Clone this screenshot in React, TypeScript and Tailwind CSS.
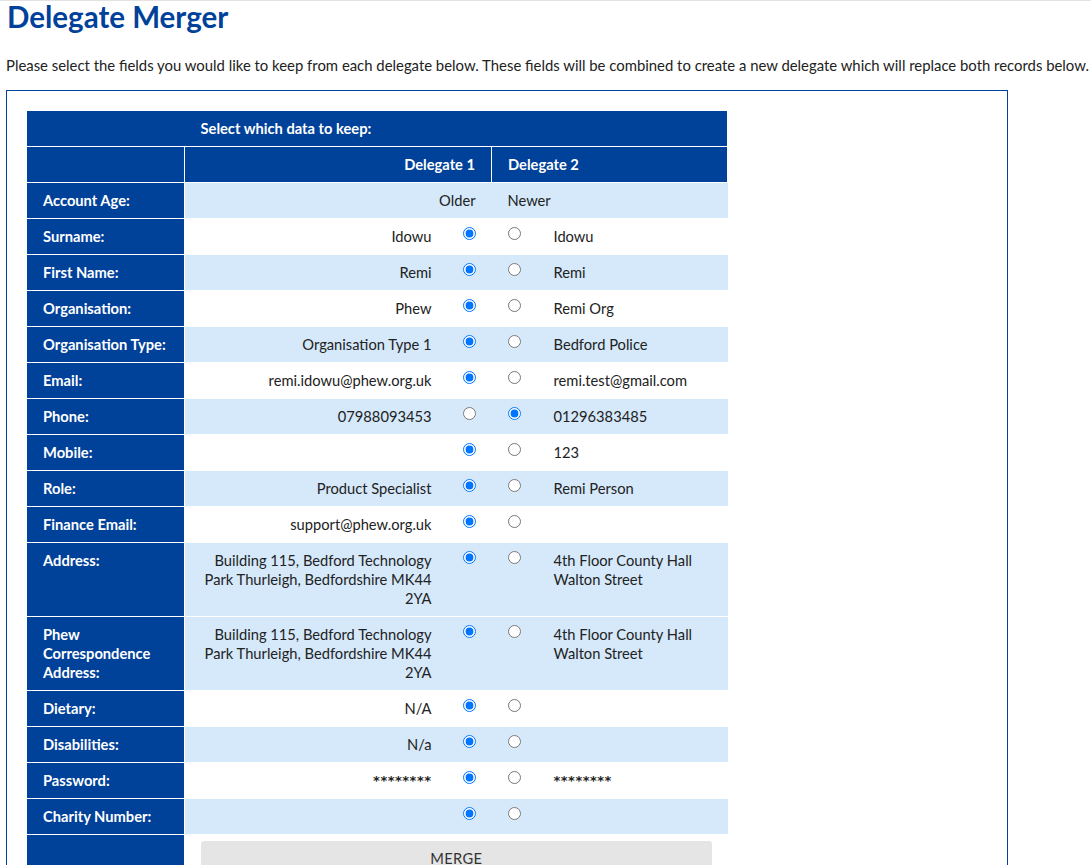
import React from "react";

type Row = {
  label: string;
  left: string[];
  right: string[];
  pick: 1 | 2;
  mask?: boolean;
  shaded: boolean;
};

const rows: Row[] = [
  { label: "Surname:", left: ["Idowu"], right: ["Idowu"], pick: 1, shaded: false },
  { label: "First Name:", left: ["Remi"], right: ["Remi"], pick: 1, shaded: true },
  { label: "Organisation:", left: ["Phew"], right: ["Remi Org"], pick: 1, shaded: false },
  { label: "Organisation Type:", left: ["Organisation Type 1"], right: ["Bedford Police"], pick: 1, shaded: true },
  { label: "Email:", left: ["remi.idowu@phew.org.uk"], right: ["remi.test@gmail.com"], pick: 1, shaded: false },
  { label: "Phone:", left: ["07988093453"], right: ["01296383485"], pick: 2, shaded: true },
  { label: "Mobile:", left: [], right: ["123"], pick: 1, shaded: false },
  { label: "Role:", left: ["Product Specialist"], right: ["Remi Person"], pick: 1, shaded: true },
  { label: "Finance Email:", left: ["support@phew.org.uk"], right: [], pick: 1, shaded: false },
  {
    label: "Address:",
    left: ["Building 115, Bedford Technology Park Thurleigh, Bedfordshire MK44 2YA"],
    right: ["4th Floor County Hall", "Walton Street"],
    pick: 1,
    shaded: true,
  },
  {
    label: "Phew Correspondence Address:",
    left: ["Building 115, Bedford Technology Park Thurleigh, Bedfordshire MK44 2YA"],
    right: ["4th Floor County Hall", "Walton Street"],
    pick: 1,
    shaded: true,
  },
  { label: "Dietary:", left: ["N/A"], right: [], pick: 1, shaded: false },
  { label: "Disabilities:", left: ["N/a"], right: [], pick: 1, shaded: true },
  { label: "Password:", left: ["********"], right: ["********"], pick: 1, mask: true, shaded: false },
  { label: "Charity Number:", left: [], right: [], pick: 1, shaded: true },
];

const labelCell =
  "bg-[#00419a] text-white font-bold text-left align-top px-4 py-2 border border-white";
const cell = "align-top py-2 border-y border-white";

const Radio = ({ checked, name }: { checked: boolean; name: string }) => (
  <input
    type="radio"
    name={name}
    defaultChecked={checked}
    className="m-0 w-[13px] h-[13px] align-top accent-[#0075ff]"
  />
);

const Value = ({ lines, mask }: { lines: string[]; mask?: boolean }) => (
  <>
    {lines.map((t) => (
      <div
        key={t}
        className={mask ? "font-['DejaVu_Sans',sans-serif] text-[13px] tracking-[0.5px] font-bold" : ""}
      >
        {t}
      </div>
    ))}
  </>
);

export default function App() {
  return (
    <div className="min-h-screen bg-white border-t border-[#e2e2e2] font-['Lato',sans-serif] text-[14.7px] leading-[19px] text-[#222]">
      <h1 className="px-[7px] text-[29.5px] leading-[32px] font-bold text-[#00419a]">
        Delegate Merger
      </h1>
      <p className="px-[6px] mt-[23px] whitespace-nowrap text-[14.88px]">
        Please select the fields you would like to keep from each delegate below. These fields will be
        combined to create a new delegate which will replace both records below.
      </p>
      <div className="ml-[6px] mt-[15px] w-[1002px] border border-[#00419a] pl-[19px] pt-[19px]">
        <table className="w-[701px] border-collapse table-fixed">
          <colgroup>
            <col className="w-[158px]" />
            <col className="w-[263px]" />
            <col className="w-[44px]" />
            <col className="w-[46px]" />
            <col className="w-[190px]" />
          </colgroup>
          <thead>
            <tr className="bg-[#00419a] text-white font-bold">
              <th className="border-y border-l border-white py-2"></th>
              <th colSpan={4} className="border-y border-r border-white py-2 px-4 text-left">
                Select which data to keep:
              </th>
            </tr>
            <tr className="bg-[#00419a] text-white font-bold">
              <th className="border border-white py-2"></th>
              <th colSpan={2} className="border border-white py-2 px-4 text-right">
                Delegate 1
              </th>
              <th colSpan={2} className="border border-white py-2 px-4 text-left">
                Delegate 2
              </th>
            </tr>
          </thead>
          <tbody>
            <tr className="bg-[#d5e9fb]">
              <td className={labelCell}>Account Age:</td>
              <td colSpan={2} className={`${cell} px-4 text-right`}>
                Older
              </td>
              <td colSpan={2} className={`${cell} px-4 text-left`}>
                Newer
              </td>
            </tr>
            {rows.map((r, i) => (
              <tr key={r.label} className={r.shaded ? "bg-[#d5e9fb]" : "bg-white"}>
                <td className={labelCell}>{r.label}</td>
                <td className={`${cell} px-4 text-right`}>
                  <Value lines={r.left} mask={r.mask} />
                </td>
                <td className={`${cell} text-center`}>
                  <Radio checked={r.pick === 1} name={`f${i}`} />
                </td>
                <td className={`${cell} text-center`}>
                  <Radio checked={r.pick === 2} name={`f${i}`} />
                </td>
                <td className={`${cell} px-4 text-left`}>
                  <Value lines={r.right} mask={r.mask} />
                </td>
              </tr>
            ))}
            <tr>
              <td className={labelCell}></td>
              <td colSpan={4} className="border-y border-white px-4 pt-[6px] pb-4">
                <button className="w-full bg-[#e5e5e5] rounded-[3px] py-2 text-[#333] tracking-wide">
                  MERGE
                </button>
              </td>
            </tr>
          </tbody>
        </table>
      </div>
    </div>
  );
}
